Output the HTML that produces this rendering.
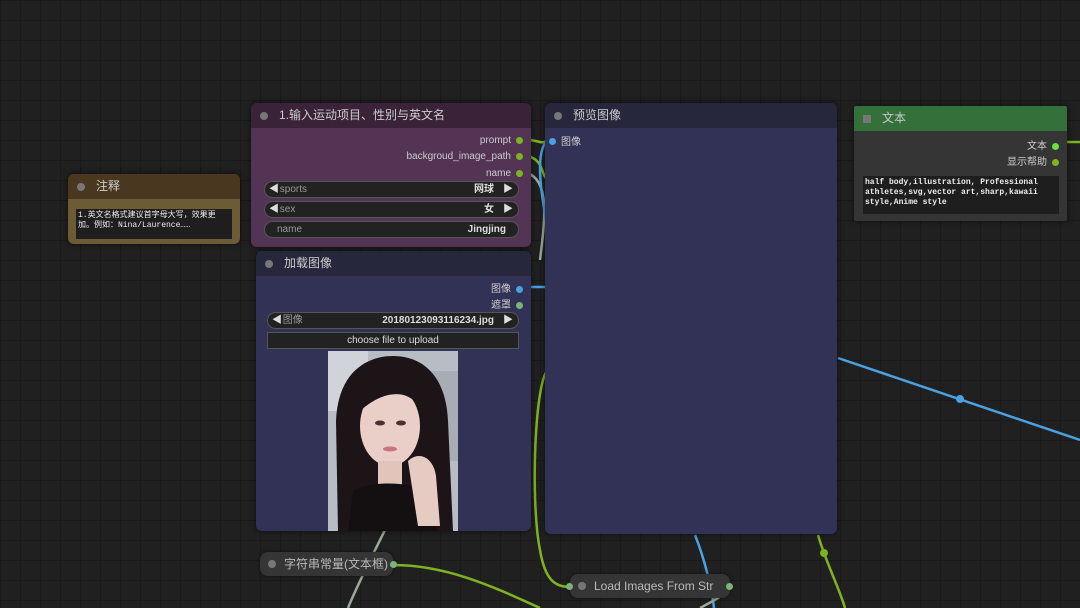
<!DOCTYPE html>
<html><head><meta charset="utf-8"><style>
*{box-sizing:border-box;margin:0;padding:0}
body{width:1080px;height:608px;overflow:hidden;position:relative;font-family:"Liberation Sans","Noto Sans CJK SC",sans-serif;font-size:11px;color:#ddd;
background-color:#202020;background-image:linear-gradient(#1a1a1a 1px,transparent 1px),linear-gradient(90deg,#1a1a1a 1px,transparent 1px);background-size:20px 20px}
.n{position:absolute;border-radius:6px;box-shadow:0 0 6px rgba(0,0,0,.6)}
.h{height:25px;line-height:25px;padding-left:28px;font-size:12px;color:#ccc;position:relative;border-radius:6px 6px 0 0}
.h:before{content:"";position:absolute;left:9px;top:9px;width:8px;height:8px;border-radius:50%;background:#777}
.sq:before{border-radius:0}
.o{position:absolute;right:8px;font-size:10px;color:#ccc;text-align:right}
.o i{display:inline-block;width:7px;height:7px;border-radius:50%;margin-left:5px;vertical-align:-1px}
.w{position:absolute;height:17px;border-radius:9px;background:#222;border:1px solid #555;font-size:10px;line-height:15px;color:#999;padding:0 12px}
.w b{position:absolute;right:24px;color:#ddd}
.w .l{position:absolute;left:4px;color:#ddd}.w .r{position:absolute;right:5px;color:#ddd}
.txt{position:absolute;background:#1e1e1e;font-family:"Liberation Mono","Noto Sans CJK SC",monospace;font-size:8px;color:#eee;line-height:10px;padding:2px 2px}
.pill{position:absolute;height:24px;border-radius:8px;background:#353535;line-height:24px;padding-left:24px;color:#bbb;font-size:12px;box-shadow:0 0 4px rgba(0,0,0,.5)}
.pill:before{content:"";position:absolute;left:8px;top:8px;width:8px;height:8px;border-radius:50%;background:#777}
</style></head><body>
<svg style="position:absolute;left:0;top:0" width="1080" height="608">
<g fill="none" stroke-width="2.5">
<path d="M527 140 C540 140 540 145 548 140" stroke="#7db320"/>
<path d="M527 156 C545 160 540 175 548 180" stroke="#7db320"/>
<path d="M527 173 C550 180 545 220 540 260" stroke="#99aa99"/>
<path d="M548 140 C535 150 540 190 548 230" stroke="#4aa0e0"/>
<path d="M527 287 L548 287" stroke="#4aa0e0"/>
<path d="M548 370 C535 380 530 500 540 550 C545 580 555 587 570 587" stroke="#7db320"/>
<path d="M393 565 C450 565 500 590 540 608" stroke="#7db320"/>
<path d="M385 530 C370 560 355 590 348 608" stroke="#99aa99"/>
<path d="M838 358 L1080 440" stroke="#4aa0e0"/>
<path d="M695 535 C705 560 712 590 714 608" stroke="#4aa0e0"/>
<path d="M818 535 C825 560 840 590 845 608" stroke="#7db320"/>
<path d="M1062 142 L1080 142" stroke="#7db320"/>
<path d="M730 587 C725 595 715 600 700 608" stroke="#99aa99"/>
</g>
<circle cx="960" cy="399" r="4" fill="#4aa0e0"/><circle cx="824" cy="553" r="4" fill="#7db320"/>
</svg>

<div class="n" style="left:68px;top:174px;width:172px;height:70px;background:#6d5b35">
<div class="h" style="background:#4a3720">注释</div>
<div class="txt" style="left:8px;top:35px;width:156px;height:30px">1.英文名格式建议首字母大写，效果更加。例如：Nina/Laurence……</div></div>

<div class="n" style="left:251px;top:103px;width:280px;height:144px;background:#533455">
<div class="h" style="background:#3a2339">1.输入运动项目、性别与英文名</div>
<div class="o" style="top:32px">prompt<i style="background:#7db320"></i></div>
<div class="o" style="top:48px">backgroud_image_path<i style="background:#7db320"></i></div>
<div class="o" style="top:65px">name<i style="background:#7db320"></i></div>
<div class="w" style="left:13px;top:78px;width:255px"><span class="l">◀</span>&nbsp;sports<b>网球</b><span class="r">▶</span></div>
<div class="w" style="left:13px;top:98px;width:255px"><span class="l">◀</span>&nbsp;sex<b>女</b><span class="r">▶</span></div>
<div class="w" style="left:13px;top:118px;width:255px">name<b style="right:12px">Jingjing</b></div>
</div>

<div class="n" style="left:256px;top:251px;width:275px;height:280px;background:#323256">
<div class="h" style="background:#26263c">加载图像</div>
<div class="o" style="top:29px">图像<i style="background:#4aa0e0"></i></div>
<div class="o" style="top:45px">遮罩<i style="background:#7db37a"></i></div>
<div class="w" style="left:11px;top:61px;width:252px"><span class="l">◀</span>&nbsp;图像<b style="color:#ddd">20180123093116234.jpg</b><span class="r">▶</span></div>
<div style="position:absolute;left:11px;top:81px;width:252px;height:17px;background:#222;border:1px solid #555;text-align:center;font-size:10px;line-height:15px;color:#ddd">choose file to upload</div>
<svg style="position:absolute;left:72px;top:100px" width="130" height="180">
<rect width="130" height="180" fill="#b8bcc4"/>
<rect x="0" y="0" width="40" height="60" fill="#dfe2e8" opacity=".6"/>
<rect x="95" y="20" width="35" height="90" fill="#a8acb4"/>
<path d="M10 180 L8 70 C10 20 40 5 65 5 C95 5 118 25 120 70 L125 180 Z" fill="#1c1416"/>
<ellipse cx="62" cy="75" rx="30" ry="40" fill="#e9cfc7"/>
<path d="M32 60 C35 30 55 22 70 24 C85 28 92 45 93 60 C85 40 60 35 32 60Z" fill="#1c1416"/>
<rect x="50" y="110" width="24" height="30" fill="#e2c4ba"/>
<path d="M20 180 L25 140 C40 130 80 130 100 140 L110 180Z" fill="#141012"/>
<path d="M80 110 C90 100 105 105 108 125 L112 175 L90 175 Z" fill="#e6cbc2"/>
<ellipse cx="52" cy="72" rx="5" ry="2.5" fill="#4a3030"/><ellipse cx="73" cy="72" rx="5" ry="2.5" fill="#4a3030"/>
<ellipse cx="62" cy="98" rx="7" ry="2.5" fill="#d07080"/>
</svg>
</div>

<div class="n" style="left:545px;top:103px;width:292px;height:431px;background:#323256">
<div class="h" style="background:#26263c">预览图像</div>
<div style="position:absolute;left:4px;top:30px;font-size:10px;color:#ccc"><i style="display:inline-block;width:7px;height:7px;border-radius:50%;background:#4aa0e0;margin-right:5px"></i>图像</div>
</div>

<div class="n" style="left:854px;top:106px;width:213px;height:115px;background:#353535;border-radius:2px">
<div class="h sq" style="background:#33703a;border-radius:2px 2px 0 0">文本</div>
<div class="o" style="top:31px">文本<i style="background:#6de040"></i></div>
<div class="o" style="top:47px">显示帮助<i style="background:#7db320"></i></div>
<div class="txt" style="left:9px;top:70px;width:196px;height:38px;font-weight:bold">half body,illustration, Professional athletes,svg,vector art,sharp,kawaii style,Anime style</div>
</div>

<div class="pill" style="left:260px;top:552px;width:133px">字符串常量(文本框)</div>
<div class="pill" style="left:570px;top:574px;width:160px">Load Images From Str</div>
<div style="position:absolute;left:390px;top:561px;width:7px;height:7px;border-radius:50%;background:#7db37a"></div>
<div style="position:absolute;left:566px;top:583px;width:7px;height:7px;border-radius:50%;background:#7db37a"></div>
<div style="position:absolute;left:726px;top:583px;width:7px;height:7px;border-radius:50%;background:#7db37a"></div>
</body></html>
